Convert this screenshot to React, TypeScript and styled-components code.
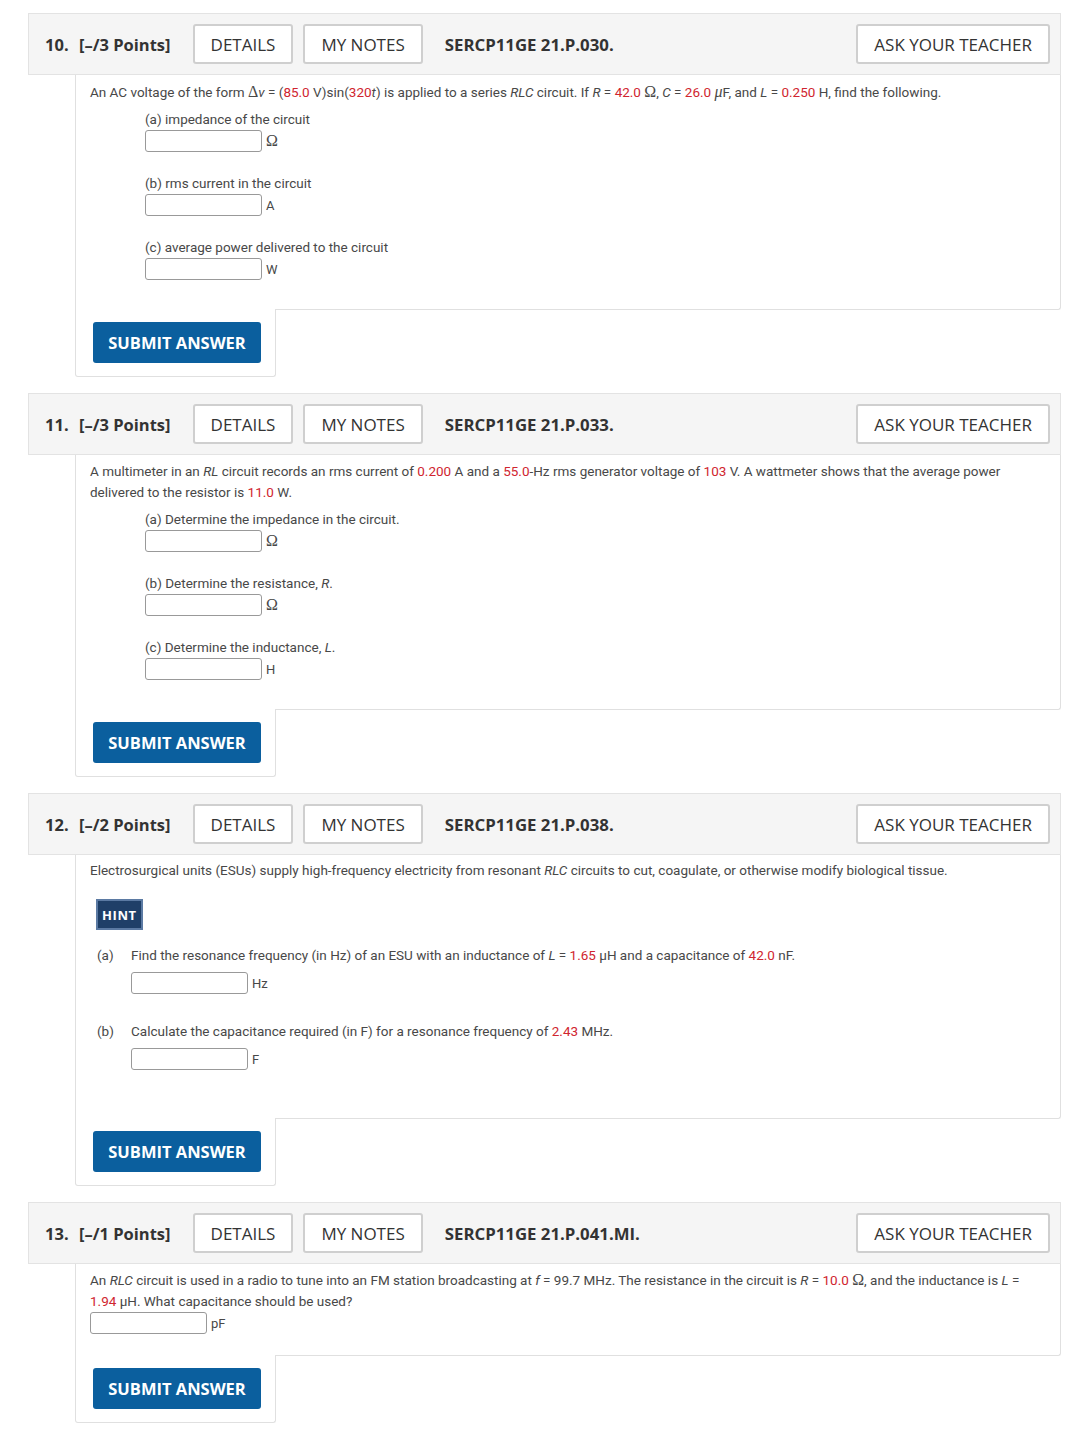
import React from "react";
import styled, { createGlobalStyle } from "styled-components";

const GlobalStyle = createGlobalStyle`
  body {
    margin: 0;
    background: #ffffff;
  }
`;

const Page = styled.div`
  padding: 13px 17px 20px 28px;
`;

const Question = styled.section`
  margin-bottom: 16px;
`;

const Header = styled.div`
  display: flex;
  align-items: center;
  height: 62px;
  box-sizing: border-box;
  padding: 0 10px 0 16px;
  background: #f5f5f5;
  border: 1px solid #e3e3e3;
  font-family: "Open Sans", sans-serif;
  font-size: 16.5px;
  color: #333;
`;

const Num = styled.span`
  font-weight: 700;
  width: 34px;
`;

const Points = styled.span`
  font-weight: 700;
  margin-right: 22px;
`;

const HeadButton = styled.button<{ $right?: boolean }>`
  height: 40px;
  padding: 0 16px;
  margin-right: ${(p) => (p.$right ? "0" : "10px")};
  margin-left: ${(p) => (p.$right ? "auto" : "0")};
  background: #fff;
  border: 2px solid #cfcfcf;
  border-radius: 3px;
  font-family: "Open Sans", sans-serif;
  font-size: 17px;
  color: #333;
`;

const Code = styled.span`
  font-weight: 700;
  font-size: 16.8px;
  margin-left: 12px;
`;

const Body = styled.div<{ $pt: number; $pb: number }>`
  margin-left: 47px;
  padding: ${(p) => p.$pt}px 14px ${(p) => p.$pb}px 14px;
  border: 1px solid #e0e0e0;
  border-top: none;
  border-bottom-right-radius: 3px;
  font-family: Roboto, sans-serif;
  font-size: 13.5px;
  line-height: 21px;
  color: #484848;
`;

const Text = styled.div``;

const Red = styled.span`
  color: #d0252f;
`;

const Sym = styled.span`
  font-family: "Liberation Serif", serif;
  font-size: 16px;
`;

const Parts = styled.div`
  margin: 6px 0 0 55px;
`;

const Part = styled.div`
  margin-bottom: 21px;
`;

const AnswerRow = styled.div`
  display: flex;
  align-items: center;
  gap: 4px;
  height: 22px;
`;

const Input = styled.input`
  width: 117px;
  height: 22px;
  box-sizing: border-box;
  border: 1px solid #999;
  border-radius: 3px;
  background: #fff;
`;

const Unit = styled.span`
  font-size: 13px;
`;

const Hint = styled.button`
  margin: 18px 0 15px 6px;
  height: 31px;
  padding: 0 4px;
  background: #1f3f68;
  border: 2px solid #5b7aa3;
  font-family: "Open Sans", sans-serif;
  font-weight: 700;
  font-size: 13px;
  letter-spacing: 0.6px;
  color: #fff;
`;

const Table = styled.div`
  display: grid;
  grid-template-columns: 34px 1fr;
  margin-left: 7px;
`;

const TablePart = styled.div<{ $mb: number }>`
  margin-bottom: ${(p) => p.$mb}px;
`;

const TableAnswer = styled.div`
  margin-top: 6px;
`;

const Footer = styled.div`
  margin-left: 47px;
`;

const SubmitCell = styled.div`
  width: 201px;
  box-sizing: border-box;
  margin-top: -1px;
  padding: 13px 0 13px 17px;
  background: #fff;
  border: 1px solid #e0e0e0;
  border-top: none;
  border-radius: 0 0 3px 3px;
`;

const Submit = styled.button`
  width: 168px;
  height: 41px;
  background: #0b5f9e;
  border: none;
  border-radius: 3px;
  font-family: "Open Sans", sans-serif;
  font-weight: 700;
  font-size: 16.5px;
  color: #fff;
`;

function QHeader({ n, pts, code }: { n: number; pts: number; code: string }) {
  return (
    <Header>
      <Num>{n}.</Num>
      <Points>[–/{pts} Points]</Points>
      <HeadButton>DETAILS</HeadButton>
      <HeadButton>MY NOTES</HeadButton>
      <Code>{code}</Code>
      <HeadButton $right>ASK YOUR TEACHER</HeadButton>
    </Header>
  );
}

function Answer({ unit }: { unit: React.ReactNode }) {
  return (
    <AnswerRow>
      <Input />
      <Unit>{unit}</Unit>
    </AnswerRow>
  );
}

function SubmitFooter() {
  return (
    <Footer>
      <SubmitCell>
        <Submit>SUBMIT ANSWER</Submit>
      </SubmitCell>
    </Footer>
  );
}

const Omega = <Sym>Ω</Sym>;

export default function App() {
  return (
    <Page>
      <GlobalStyle />

      <Question>
        <QHeader n={10} pts={3} code="SERCP11GE 21.P.030." />
        <Body $pt={6} $pb={8}>
          <Text>
            An AC voltage of the form <Sym>Δ</Sym>
            <i>v</i> = (<Red>85.0</Red> V)sin(<Red>320</Red>
            <i>t</i>) is applied to a series <i>RLC</i> circuit. If <i>R</i> ={" "}
            <Red>42.0</Red> {Omega}, <i>C</i> = <Red>26.0</Red>{" "}
            <Sym>
              <i>μ</i>
            </Sym>
            F, and <i>L</i> = <Red>0.250</Red> H, find the following.
          </Text>
          <Parts>
            <Part>
              <div>(a) impedance of the circuit</div>
              <Answer unit={Omega} />
            </Part>
            <Part>
              <div>(b) rms current in the circuit</div>
              <Answer unit="A" />
            </Part>
            <Part>
              <div>(c) average power delivered to the circuit</div>
              <Answer unit="W" />
            </Part>
          </Parts>
        </Body>
        <SubmitFooter />
      </Question>

      <Question>
        <QHeader n={11} pts={3} code="SERCP11GE 21.P.033." />
        <Body $pt={6} $pb={8}>
          <Text>
            A multimeter in an <i>RL</i> circuit records an rms current of{" "}
            <Red>0.200</Red> A and a <Red>55.0</Red>-Hz rms generator voltage of{" "}
            <Red>103</Red> V. A wattmeter shows that the average power delivered
            to the resistor is <Red>11.0</Red> W.
          </Text>
          <Parts>
            <Part>
              <div>(a) Determine the impedance in the circuit.</div>
              <Answer unit={Omega} />
            </Part>
            <Part>
              <div>
                (b) Determine the resistance, <i>R</i>.
              </div>
              <Answer unit={Omega} />
            </Part>
            <Part>
              <div>
                (c) Determine the inductance, <i>L</i>.
              </div>
              <Answer unit="H" />
            </Part>
          </Parts>
        </Body>
        <SubmitFooter />
      </Question>

      <Question>
        <QHeader n={12} pts={2} code="SERCP11GE 21.P.038." />
        <Body $pt={5} $pb={22}>
          <Text>
            Electrosurgical units (ESUs) supply high-frequency electricity from
            resonant <i>RLC</i> circuits to cut, coagulate, or otherwise modify
            biological tissue.
          </Text>
          <Hint>HINT</Hint>
          <Table>
            <div>(a)</div>
            <TablePart $mb={27}>
              <div>
                Find the resonance frequency (in Hz) of an ESU with an inductance
                of <i>L</i> = <Red>1.65</Red> μH and a capacitance of{" "}
                <Red>42.0</Red> nF.
              </div>
              <TableAnswer>
                <Answer unit="Hz" />
              </TableAnswer>
            </TablePart>
            <div>(b)</div>
            <TablePart $mb={26}>
              <div>
                Calculate the capacitance required (in F) for a resonance
                frequency of <Red>2.43</Red> MHz.
              </div>
              <TableAnswer>
                <Answer unit="F" />
              </TableAnswer>
            </TablePart>
          </Table>
        </Body>
        <SubmitFooter />
      </Question>

      <Question>
        <QHeader n={13} pts={1} code="SERCP11GE 21.P.041.MI." />
        <Body $pt={5} $pb={21}>
          <Text>
            An <i>RLC</i> circuit is used in a radio to tune into an FM station
            broadcasting at <i>f</i> = 99.7 MHz. The resistance in the circuit is{" "}
            <i>R</i> = <Red>10.0</Red> {Omega}, and the inductance is <i>L</i> ={" "}
            <Red>1.94</Red> μH. What capacitance should be used?
          </Text>
          <Answer unit="pF" />
        </Body>
        <SubmitFooter />
      </Question>
    </Page>
  );
}
